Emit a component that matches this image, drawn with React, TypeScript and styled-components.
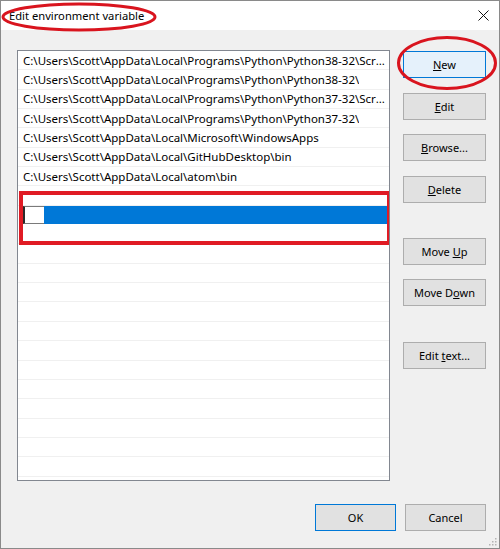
import React from "react";
import styled, { createGlobalStyle } from "styled-components";

const Global = createGlobalStyle`
  html, body { margin: 0; padding: 0; background: #f0f0f0; }
  body { font-family: "Noto Sans", "Open Sans", sans-serif; }
  * { box-sizing: border-box; }
`;

const Window = styled.div`
  position: relative;
  width: 500px;
  height: 549px;
  border: 1px solid #8a8a8a;
  background: #f0f0f0;
  display: flex;
  flex-direction: column;
  overflow: hidden;
`;

const TitleBar = styled.div`
  height: 29px;
  background: #ffffff;
  display: flex;
  align-items: center;
  justify-content: space-between;
  padding: 0 10px 0 8px;
  font-size: 11.2px;
  color: #000;
`;

const Close = styled.svg`
  width: 11px;
  height: 11px;
`;

const Body = styled.div`
  display: grid;
  grid-template-columns: 373px 83px;
  column-gap: 13px;
  padding: 20px 0 0 16px;
`;

const List = styled.div`
  position: relative;
  height: 431px;
  background: #ffffff;
  border: 1px solid #828790;
  overflow: hidden;
`;

const Row = styled.div`
  height: 19.35px;
  display: flex;
  align-items: center;
  padding-left: 5px;
  font-size: 11.5px;
  color: #000;
  white-space: nowrap;
  overflow: hidden;
  border-bottom: 1px solid #f0f0f0;
`;

const RowText = styled.span`
  overflow: hidden;
  text-overflow: ellipsis;
  white-space: nowrap;
  max-width: 364px;
`;

const EditRow = styled.div`
  height: 19.35px;
  display: flex;
  align-items: stretch;
  padding: 0 0 1px 5px;
`;

const Caret = styled.div`
  width: 21px;
  background: #ffffff;
  border-top: 1px solid #7a7a7a;
  border-left: 2px solid #2b2b2b;
  border-bottom: 1px solid #7a7a7a;
`;

const Selected = styled.div`
  flex: 1;
  background: #0078d7;
`;

const ButtonCol = styled.div`
  display: flex;
  flex-direction: column;
  padding-top: 1px;
`;

const Btn = styled.button<{ $mt?: number; $active?: boolean; $default?: boolean; $w?: number }>`
  width: ${(p) => p.$w ?? 83}px;
  height: 27px;
  margin-top: ${(p) => p.$mt ?? 0}px;
  background: ${(p) => (p.$active ? "#e5f1fb" : "#e1e1e1")};
  border: 1px solid ${(p) => (p.$active || p.$default ? "#0078d7" : "#adadad")};
  font-family: "Noto Sans", "Open Sans", sans-serif;
  font-size: 11px;
  color: #000;
  padding: 0;
  display: flex;
  align-items: center;
  justify-content: center;
`;

const Footer = styled.div`
  display: flex;
  justify-content: flex-end;
  gap: 9px;
  padding: 23px 13px 0 0;
`;

const Overlay = styled.svg`
  position: absolute;
  pointer-events: none;
  overflow: visible;
`;

const RedBox = styled.div`
  position: absolute;
  left: 1px;
  top: 140px;
  width: 372px;
  height: 54px;
  border: 4px solid #e01b24;
  pointer-events: none;
`;

const Grip = styled.svg`
  position: absolute;
  right: 2px;
  bottom: 2px;
  width: 8px;
  height: 8px;
`;

const paths = [
  "C:\\Users\\Scott\\AppData\\Local\\Programs\\Python\\Python38-32\\Scripts\\",
  "C:\\Users\\Scott\\AppData\\Local\\Programs\\Python\\Python38-32\\",
  "C:\\Users\\Scott\\AppData\\Local\\Programs\\Python\\Python37-32\\Scripts\\",
  "C:\\Users\\Scott\\AppData\\Local\\Programs\\Python\\Python37-32\\",
  "C:\\Users\\Scott\\AppData\\Local\\Microsoft\\WindowsApps",
  "C:\\Users\\Scott\\AppData\\Local\\GitHubDesktop\\bin",
  "C:\\Users\\Scott\\AppData\\Local\\atom\\bin",
  "",
];

export default function App() {
  const empties = Array.from({ length: 13 });
  return (
    <>
      <Global />
      <Window>
        <TitleBar>
          <span>Edit environment variable</span>
          <Close viewBox="0 0 11 11">
            <path d="M0.5 0.5 L10.5 10.5 M10.5 0.5 L0.5 10.5" stroke="#111" strokeWidth="1" fill="none" />
          </Close>
        </TitleBar>
        <Body>
          <List>
            {paths.map((p, i) => (
              <Row key={i}>
                <RowText>{p}</RowText>
              </Row>
            ))}
            <EditRow>
              <Caret />
              <Selected />
            </EditRow>
            {empties.map((_, i) => (
              <Row key={"e" + i} />
            ))}
            <RedBox />
          </List>
          <ButtonCol>
            <Btn $active>
              <span><u>N</u>ew</span>
            </Btn>
            <Btn $mt={15}>
              <span><u>E</u>dit</span>
            </Btn>
            <Btn $mt={14}>
              <span><u>B</u>rowse...</span>
            </Btn>
            <Btn $mt={15}>
              <span><u>D</u>elete</span>
            </Btn>
            <Btn $mt={35}>
              <span>Move <u>U</u>p</span>
            </Btn>
            <Btn $mt={14}>
              <span>Move D<u>o</u>wn</span>
            </Btn>
            <Btn $mt={36}>
              <span>Edit <u>t</u>ext...</span>
            </Btn>
          </ButtonCol>
        </Body>
        <Footer>
          <Btn $default $w={81}>OK</Btn>
          <Btn $w={81}>Cancel</Btn>
        </Footer>
        <Overlay style={{ left: 0, top: 1, width: 157, height: 30 }} viewBox="0 0 157 30">
          <ellipse cx="78" cy="15" rx="76" ry="13" fill="none" stroke="#d9141e" strokeWidth="3" />
        </Overlay>
        <Overlay style={{ left: 396, top: 35, width: 101, height: 55 }} viewBox="0 0 101 55">
          <ellipse cx="50" cy="27" rx="48.5" ry="25.5" fill="none" stroke="#d9141e" strokeWidth="3" />
        </Overlay>
        <Grip viewBox="0 0 8 8">
          <rect x="6" y="0" width="1.5" height="1.5" fill="#b4b4b4" />
          <rect x="3" y="3" width="1.5" height="1.5" fill="#b4b4b4" />
          <rect x="6" y="3" width="1.5" height="1.5" fill="#b4b4b4" />
          <rect x="0" y="6" width="1.5" height="1.5" fill="#b4b4b4" />
          <rect x="3" y="6" width="1.5" height="1.5" fill="#b4b4b4" />
          <rect x="6" y="6" width="1.5" height="1.5" fill="#b4b4b4" />
        </Grip>
      </Window>
    </>
  );
}
